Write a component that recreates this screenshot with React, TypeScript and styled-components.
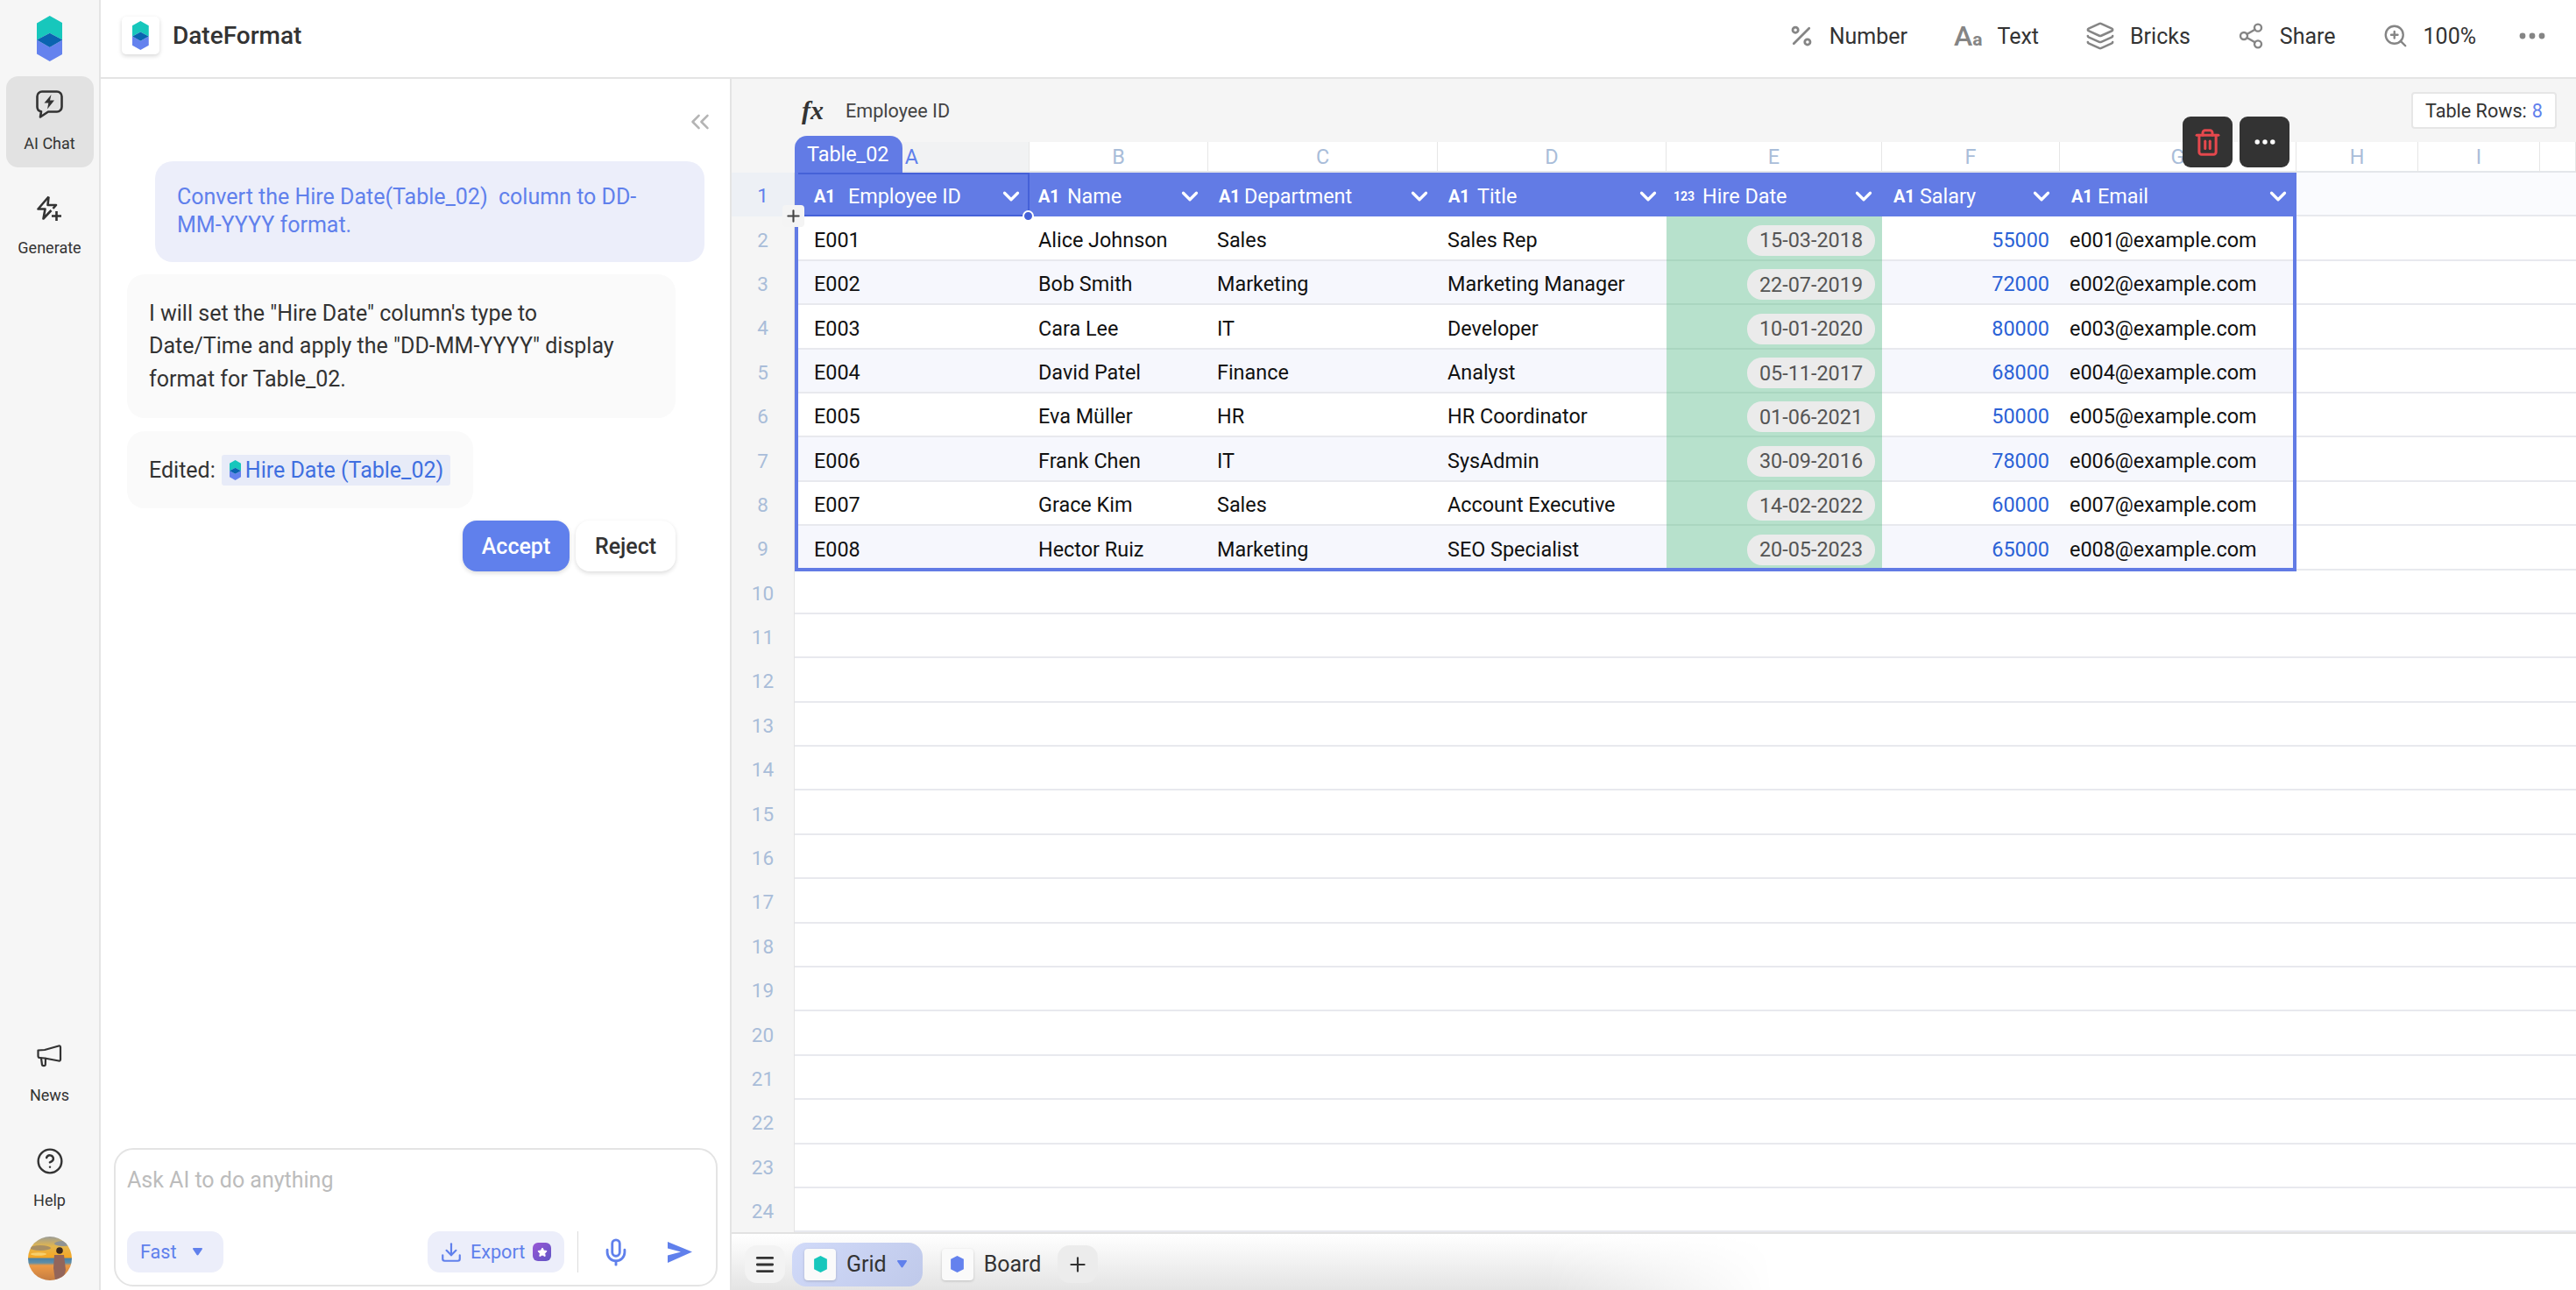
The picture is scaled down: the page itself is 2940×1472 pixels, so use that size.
import React from "react";
import styled, { createGlobalStyle } from "styled-components";
import {
  ChevronDown,
  ChevronsLeft,
  CircleHelp,
  Download,
  Layers,
  Menu,
  Mic,
  Percent,
  Plus,
  Share2,
  Star,
  Trash2,
  ZoomIn,
} from "lucide-react";

const GlobalStyle = createGlobalStyle`
  html, body { margin: 0; padding: 0; height: 100%; background: #fff; }
  body { font-family: Roboto, "Liberation Sans", sans-serif; color: #333; }
  #root { height: 100%; }
  * { box-sizing: border-box; }
`;

const BLUE = "#627be5";
const ACCENT = "#6080ec";
const GRID_COLS = "72px 268px 204px 262px 261px 246px 203px 270px 139px 139px 1fr";

const Page = styled.div`
  width: 2940px;
  height: 1472px;
  display: grid;
  grid-template-columns: 115px 1fr;
  overflow: hidden;
`;

/* left rail */
const Rail = styled.aside`
  display: flex;
  flex-direction: column;
  align-items: center;
  background: #f6f6f6;
  border-right: 2px solid #e4e4e4;
  padding-top: 18px;
`;

const LogoWrap = styled.div`
  height: 52px;
  margin-bottom: 17px;
  display: flex;
`;

const NavItem = styled.div<{ $active?: boolean; $gap?: number }>`
  width: 100px;
  height: 104px;
  margin-top: ${(p) => p.$gap ?? 0}px;
  padding-top: 14px;
  border-radius: 14px;
  display: flex;
  flex-direction: column;
  align-items: center;
  background: ${(p) => (p.$active ? "#e2e2e2" : "transparent")};
  color: #333;
`;

const NavIcon = styled.div`
  height: 36px;
  display: flex;
  align-items: center;
  justify-content: center;
`;

const NavLabel = styled.div`
  margin-top: 16px;
  font-size: 18px;
  line-height: 22px;
  color: #333;
`;

const RailBottom = styled.div`
  margin-top: auto;
  display: flex;
  flex-direction: column;
  align-items: center;
  padding-bottom: 11px;
`;

const Avatar = styled.div`
  margin-top: 14px;
  width: 50px;
  height: 50px;
  border-radius: 50%;
  overflow: hidden;
`;

/* main column */
const Main = styled.div`
  display: flex;
  flex-direction: column;
  min-width: 0;
`;

const TopBar = styled.header`
  height: 90px;
  flex: none;
  display: flex;
  align-items: center;
  padding: 0 35px 8px 24px;
  border-bottom: 2px solid #e4e4e4;
`;

const FileBadge = styled.div`
  width: 43px;
  height: 43px;
  border-radius: 5px;
  background: #fff;
  box-shadow: 0 2px 5px rgba(0, 0, 0, 0.16);
  display: flex;
  align-items: center;
  justify-content: center;
  margin-right: 15px;
`;

const FileName = styled.div`
  font-size: 28px;
  font-weight: 500;
  color: #333;
`;

const TopActions = styled.div`
  margin-left: auto;
  display: flex;
  align-items: center;
  gap: 53px;
  padding-top: 2px;
`;

const TopAction = styled.div`
  display: flex;
  align-items: center;
  gap: 17px;
  font-size: 25px;
  color: #333;

  svg {
    color: #858585;
    display: block;
  }
`;

const TextGlyph = styled.span`
  color: #858585;
  font-weight: 500;
  font-size: 32px;
  line-height: 1;
  display: inline-flex;
  align-items: baseline;

  small {
    font-size: 21px;
    font-weight: 700;
  }
`;

const ToolbarDots = styled.div`
  margin-left: -4px;
  display: flex;
`;

const Body = styled.div`
  flex: 1;
  display: grid;
  grid-template-columns: 720px 1fr;
  min-height: 0;
`;

/* chat */
const ChatPanel = styled.section`
  display: flex;
  flex-direction: column;
  border-right: 2px solid #e4e4e4;
  padding: 32px 0 4px;
  min-height: 0;
`;

const CollapseRow = styled.div`
  display: flex;
  justify-content: flex-end;
  padding-right: 17px;
  height: 62px;
  color: #b4b4b4;
`;

const UserBubble = styled.div`
  align-self: flex-end;
  width: 627px;
  margin-right: 29px;
  padding: 24.5px 25px;
  background: #eceefa;
  border-radius: 20px;
  color: ${ACCENT};
  font-size: 25px;
  line-height: 32.8px;
  white-space: pre-wrap;
`;

const AiBubble = styled.div`
  width: 626px;
  margin: 14px 0 0 30px;
  padding: 26px 25px;
  background: #fafafa;
  border-radius: 20px;
  font-size: 25px;
  line-height: 37.5px;
  color: #333;
`;

const EditedBubble = styled.div`
  width: 395px;
  height: 88px;
  margin: 15px 0 0 30px;
  padding-left: 25px;
  display: flex;
  align-items: center;
  gap: 7px;
  background: #fafafa;
  border-radius: 20px;
  font-size: 25px;
  color: #333;
`;

const RefChip = styled.span`
  display: inline-flex;
  align-items: center;
  gap: 5px;
  height: 35px;
  padding: 0 8px 0 9px;
  background: #e7ebf8;
  border-radius: 3px;
  color: #3f6fe0;
`;

const ActionRow = styled.div`
  display: flex;
  justify-content: flex-end;
  gap: 7px;
  margin: 14px 62px 0 0;
`;

const ActionButton = styled.button<{ $primary?: boolean }>`
  width: ${(p) => (p.$primary ? 122 : 114)}px;
  height: 58px;
  border: 0;
  border-radius: 16px;
  background: ${(p) => (p.$primary ? ACCENT : "#fff")};
  color: ${(p) => (p.$primary ? "#fff" : "#333")};
  box-shadow: 0 2px 5px rgba(0, 0, 0, 0.14);
  font: 500 25px Roboto, sans-serif;
`;

const Composer = styled.div`
  margin: auto 14px 0 15px;
  height: 158px;
  border: 2px solid #e4e4e4;
  border-radius: 22px;
  padding: 20px 27px 14px 13px;
  display: flex;
  flex-direction: column;
`;

const Placeholder = styled.div`
  font-size: 25px;
  line-height: 30px;
  color: #bcbcbc;
`;

const ComposerTools = styled.div`
  margin-top: auto;
  display: flex;
  align-items: center;
  height: 47px;
`;

const SoftChip = styled.div`
  height: 47px;
  border-radius: 14px;
  background: #eceefa;
  color: ${ACCENT};
  font-size: 21.6px;
  display: flex;
  align-items: center;
`;

const FastChip = styled(SoftChip)`
  width: 110px;
  padding-left: 15px;
  gap: 18px;
`;

const ExportChip = styled(SoftChip)`
  width: 156px;
  margin-left: auto;
  padding-left: 14px;
  gap: 9px;
`;

const ProBadge = styled.span`
  width: 21px;
  height: 21px;
  border-radius: 6px;
  background: linear-gradient(135deg, #9a57d6, #5f55c4);
  display: flex;
  align-items: center;
  justify-content: center;
`;

const ToolDivider = styled.div`
  width: 1px;
  height: 47px;
  margin: 0 26px 0 15px;
  background: #dcdcdc;
`;

const MicSlot = styled.div`
  width: 34px;
  margin-right: 42px;
  display: flex;
  justify-content: center;
  color: ${ACCENT};
`;

/* sheet */
const SheetPane = styled.section`
  position: relative;
  display: flex;
  flex-direction: column;
  min-width: 0;
  min-height: 0;
`;

const FormulaBar = styled.div`
  height: 72px;
  flex: none;
  display: flex;
  align-items: center;
  padding: 0 22px 0 80px;
  background: #f5f5f5;
  color: #444;
  font-size: 21.6px;
`;

const FxMark = styled.span`
  width: 50px;
  font: italic 700 30px "Liberation Serif", serif;
  color: #333;
`;

const RowCount = styled.div`
  margin-left: auto;
  height: 42px;
  padding: 0 14px;
  display: flex;
  align-items: center;
  gap: 6px;
  background: #fff;
  border: 2px solid #e6e6e6;
  border-radius: 4px;
  color: #333;
  font-size: 21.6px;

  b {
    font-weight: 400;
    color: ${ACCENT};
  }
`;

const FloatTools = styled.div`
  position: absolute;
  top: 43px;
  left: 1656px;
  display: flex;
  gap: 8px;
  z-index: 5;
`;

const FloatButton = styled.div`
  width: 57px;
  height: 58px;
  border-radius: 9px;
  background: #333;
  display: flex;
  align-items: center;
  justify-content: center;
`;

const TableTab = styled.div`
  position: absolute;
  top: 65px;
  left: 72px;
  width: 123px;
  height: 42px;
  padding-left: 14px;
  border-radius: 14px 14px 0 0;
  background: ${BLUE};
  color: #fff;
  font-size: 23.4px;
  line-height: 42px;
  z-index: 4;
`;

const GridArea = styled.div`
  position: relative;
  flex: 1;
  min-height: 0;
  overflow: hidden;
  background: #fff;
`;

const LetterRow = styled.div`
  height: 35px;
  display: grid;
  grid-template-columns: ${GRID_COLS};
  background: #fff;
`;

const LetterCorner = styled.div`
  background: #f5f5f5;
`;

const Letter = styled.div<{ $active?: boolean }>`
  display: flex;
  align-items: center;
  justify-content: center;
  font-size: 23.4px;
  color: ${(p) => (p.$active ? ACCENT : "#a9bdd9")};
  background: ${(p) => (p.$active ? "#f1f2f3" : "#fff")};
  border-right: 1px solid #e6e6e6;
  border-bottom: 2px solid #e4e6ea;
`;

const SheetRow = styled.div`
  height: 50.4px;
  display: grid;
  grid-template-columns: ${GRID_COLS};
`;

const RowNumber = styled.div<{ $active?: boolean }>`
  display: flex;
  align-items: center;
  justify-content: center;
  padding-top: 2px;
  font-size: 22.5px;
  color: ${(p) => (p.$active ? ACCENT : "#a9bdd9")};
  background: ${(p) => (p.$active ? "#edf0f5" : "#f5f5f5")};
  border-right: 1px solid #e4e4e4;
`;

const HeaderCell = styled.div<{ $selected?: boolean; $pad: number; $gap: number }>`
  display: flex;
  align-items: center;
  padding: 3px 6px 0 ${(p) => p.$pad}px;
  gap: ${(p) => p.$gap}px;
  background: ${BLUE};
  color: #fff;
  font-size: 23.4px;
  outline: ${(p) => (p.$selected ? "2px solid #4561d8" : "none")};
  outline-offset: -2px;

  svg {
    margin-left: auto;
    flex: none;
  }
`;

const TypeBadge = styled.span<{ $small?: boolean }>`
  font-weight: 700;
  font-size: ${(p) => (p.$small ? 14 : 20)}px;
  letter-spacing: ${(p) => (p.$small ? 0 : -0.5)}px;
`;

const Cell = styled.div<{ $alt?: boolean; $pad?: number; $right?: boolean }>`
  display: flex;
  align-items: center;
  justify-content: ${(p) => (p.$right ? "flex-end" : "flex-start")};
  padding: ${(p) => (p.$right ? `4.5px 12px 0 0` : `4.5px 0 0 ${p.$pad ?? 0}px`)};
  background: ${(p) => (p.$alt ? "#f6f7fd" : "#fff")};
  border-bottom: 2px solid #e8e9ee;
  color: #111;
  font-size: 23.4px;
`;

const DateCell = styled.div`
  display: flex;
  align-items: center;
  justify-content: flex-end;
  padding: 5.5px 8px 0 0;
  background: #b7e1cc;
  border-bottom: 2px solid #aad6c0;
`;

const DatePill = styled.span`
  width: 146px;
  height: 35px;
  border-radius: 17px;
  background: #ebebeb;
  color: #555;
  font-size: 23.4px;
  display: flex;
  align-items: center;
  justify-content: center;
`;

const Money = styled.span`
  color: #2b62d6;
`;

const OuterFill = styled.div<{ $tint?: boolean }>`
  grid-column: span 3;
  background: ${(p) => (p.$tint ? "#fafbfe" : "#fff")};
  border-bottom: 2px solid #e8e9ee;
`;

const EmptyFill = styled(OuterFill)`
  grid-column: span 10;
`;

const TableFrame = styled.div`
  position: absolute;
  left: 72px;
  top: 35px;
  width: 1714px;
  height: 454.6px;
  border: 4px solid ${BLUE};
  border-top: 0;
  pointer-events: none;
`;

const AddHandle = styled.div`
  position: absolute;
  left: 58px;
  top: 72px;
  width: 25px;
  height: 25px;
  border-radius: 4px;
  background: #f4f4f4;
  display: flex;
  align-items: center;
  justify-content: center;
  color: #444;
`;

const ResizeDot = styled.div`
  position: absolute;
  left: 332px;
  top: 78px;
  width: 13px;
  height: 13px;
  border-radius: 50%;
  background: #4561d8;
  border: 2px solid #fff;
`;

/* bottom tabs */
const ViewBar = styled.div`
  position: relative;
  height: 66px;
  flex: none;
  display: flex;
  align-items: center;
  padding: 5px 0 0 15px;
  background: #fff;
  border-top: 2px solid #e2e2e2;

  &::before {
    content: "";
    position: absolute;
    left: 0;
    top: 0;
    bottom: 0;
    width: 1190px;
    background: linear-gradient(to bottom, #ffffff, #e4e4e4);
    mask-image: linear-gradient(to right, #000 78%, transparent 100%);
  }

  > * {
    position: relative;
  }
`;

const RoundTool = styled.div<{ $tone: string }>`
  width: 46px;
  height: 43px;
  border-radius: 14px;
  background: ${(p) => p.$tone};
  display: flex;
  align-items: center;
  justify-content: center;
  color: #333;
`;

const ViewTab = styled.div<{ $active?: boolean }>`
  height: 50px;
  display: flex;
  align-items: center;
  gap: 12px;
  font-size: 25px;
  color: #333;
  border-radius: 16px;
  padding: ${(p) => (p.$active ? "0 18px 0 14px" : "0 19px 0 14px")};
  margin-left: 8px;
  background: ${(p) => (p.$active ? "linear-gradient(135deg, #d1daf9, #bfc9ea)" : "transparent")};
`;

const ViewIcon = styled.div`
  width: 36px;
  height: 36px;
  border-radius: 4px;
  background: #fafafa;
  box-shadow: 0 1px 3px rgba(0, 0, 0, 0.18);
  display: flex;
  align-items: center;
  justify-content: center;
`;

const Logo = ({ h }: { h: number }) => (
  <svg width={(h * 88) / 155} height={h} viewBox="0 0 88 155">
    <path d="M44 0 88 25V82L44 59 0 82V25Z" fill="#17c7bc" />
    <path d="M0 82 44 107 88 82V130L44 155 0 130Z" fill="#6482ee" />
    <path d="M0 82 44 59 88 82 44 107Z" fill="#0a64b0" />
  </svg>
);

const Hexagon = ({ color }: { color: string }) => (
  <svg width="15" height="19" viewBox="0 0 14 18">
    <path d="M7 0 14 3.500V14.500L7 18 0 14.500V3.500Z" fill={color} />
  </svg>
);

const Caret = ({ size = 11 }: { size?: number }) => (
  <svg width={size} height={size * 0.8} viewBox="0 0 10 8">
    <path d="M1 0h8c.8 0 1.200.8.800 1.400L5.800 7.200c-.4.6-1.200.6-1.600 0L.2 1.400C-.2.8.2 0 1 0z" fill={ACCENT} />
  </svg>
);

const Dots = ({ color, size = 30 }: { color: string; size?: number }) => (
  <svg width={size} height="8" viewBox="0 0 30 8">
    <circle cx="4" cy="4" r="3.400" fill={color} />
    <circle cx="15" cy="4" r="3.400" fill={color} />
    <circle cx="26" cy="4" r="3.400" fill={color} />
  </svg>
);

const ChatBoltIcon = () => (
  <svg width="31" height="33" viewBox="0 0 31 33" fill="none">
    <path
      d="M7 1.500h17a5.500 5.500 0 0 1 5.500 5.500v12a5.500 5.500 0 0 1-5.500 5.500H14l-9 6 1-6.200A5.500 5.500 0 0 1 1.500 19V7A5.500 5.500 0 0 1 7 1.500z"
      stroke="#333"
      strokeWidth="2.600"
      strokeLinejoin="round"
    />
    <path d="M17.500 5 9.500 14.500h4.800L13 21.500l8-10h-5z" fill="#333" />
  </svg>
);

const GenerateIcon = () => (
  <svg width="30" height="30" viewBox="0 0 30 30" fill="none" stroke="#333" strokeWidth="2.600" strokeLinejoin="round">
    <path d="M13.500 1.500 1.500 15.500h8L7.500 26.500 16.500 17" />
    <path d="M13.500 1.500 12.500 11H22l-3.500 4" />
    <path d="M22.500 18v11M17 23.500h11" />
  </svg>
);

const NewsIcon = () => (
  <svg width="29" height="26" viewBox="0 0 29 26" fill="none" stroke="#333" strokeWidth="2.200" strokeLinejoin="round" strokeLinecap="round">
    <path d="M1.500 6.500 9 6 25 1.500c1.200-.3 2 .4 2 1.500v14c0 1.200-1 1.800-2 1.500L9 15.500l-5.500-.5c-1.300 0-2-.8-2-2z" />
    <path d="M5 15.500 6 23c.2 1.500 3.800 1.500 3.800-.2l.2-7" />
  </svg>
);

const SendIcon = () => (
  <svg width="28" height="24" viewBox="0 0 28 24">
    <path d="M0 0 28 11.500 0 24V15.500L15 11.500 0 7.500Z" fill={ACCENT} />
  </svg>
);

const AvatarArt = () => (
  <svg width="50" height="50" viewBox="0 0 50 50">
    <defs>
      <linearGradient id="sky" x1="0" y1="0" x2="0" y2="1">
        <stop offset="0" stopColor="#9a9c96" />
        <stop offset="0.22" stopColor="#e3b64e" />
        <stop offset="0.48" stopColor="#f5a623" />
        <stop offset="0.5" stopColor="#4a7fa6" />
        <stop offset="0.6" stopColor="#5f8fa8" />
        <stop offset="0.66" stopColor="#ee9a45" />
        <stop offset="1" stopColor="#c47c42" />
      </linearGradient>
    </defs>
    <rect width="50" height="50" fill="url(#sky)" />
    <ellipse cx="14" cy="13" rx="12" ry="3" fill="#a88e63" />
    <ellipse cx="40" cy="8" rx="10" ry="3" fill="#8f9394" />
    <ellipse cx="12" cy="20" rx="9" ry="1.800" fill="#f7cf6c" />
    <circle cx="36" cy="16" r="3.800" fill="#3a2a20" />
    <path d="M30 21h11l2 17-3 12h-9l-2-14z" fill="#93655a" />
  </svg>
);

const columns = [
  { name: "Employee ID", type: "A1", pad: 22, gap: 15 },
  { name: "Name", type: "A1", pad: 10, gap: 9 },
  { name: "Department", type: "A1", pad: 12, gap: 5 },
  { name: "Title", type: "A1", pad: 12, gap: 9 },
  { name: "Hire Date", type: "123", pad: 8, gap: 9 },
  { name: "Salary", type: "A1", pad: 13, gap: 6 },
  { name: "Email", type: "A1", pad: 13, gap: 6 },
];

const employees = [
  ["E001", "Alice Johnson", "Sales", "Sales Rep", "15-03-2018", "55000", "e001@example.com"],
  ["E002", "Bob Smith", "Marketing", "Marketing Manager", "22-07-2019", "72000", "e002@example.com"],
  ["E003", "Cara Lee", "IT", "Developer", "10-01-2020", "80000", "e003@example.com"],
  ["E004", "David Patel", "Finance", "Analyst", "05-11-2017", "68000", "e004@example.com"],
  ["E005", "Eva Müller", "HR", "HR Coordinator", "01-06-2021", "50000", "e005@example.com"],
  ["E006", "Frank Chen", "IT", "SysAdmin", "30-09-2016", "78000", "e006@example.com"],
  ["E007", "Grace Kim", "Sales", "Account Executive", "14-02-2022", "60000", "e007@example.com"],
  ["E008", "Hector Ruiz", "Marketing", "SEO Specialist", "20-05-2023", "65000", "e008@example.com"],
];

const letters = ["A", "B", "C", "D", "E", "F", "G", "H", "I", ""];

export default function App() {
  const emptyRows = Array.from({ length: 15 }, (_, i) => i + 10);

  return (
    <Page>
      <GlobalStyle />
      <Rail>
        <LogoWrap>
          <Logo h={52} />
        </LogoWrap>
        <NavItem $active>
          <NavIcon>
            <ChatBoltIcon />
          </NavIcon>
          <NavLabel>AI Chat</NavLabel>
        </NavItem>
        <NavItem $gap={15}>
          <NavIcon>
            <GenerateIcon />
          </NavIcon>
          <NavLabel>Generate</NavLabel>
        </NavItem>
        <RailBottom>
          <NavItem>
            <NavIcon>
              <NewsIcon />
            </NavIcon>
            <NavLabel>News</NavLabel>
          </NavItem>
          <NavItem $gap={16}>
            <NavIcon>
              <CircleHelp size={32} strokeWidth={1.8} color="#333" />
            </NavIcon>
            <NavLabel>Help</NavLabel>
          </NavItem>
          <Avatar>
            <AvatarArt />
          </Avatar>
        </RailBottom>
      </Rail>

      <Main>
        <TopBar>
          <FileBadge>
            <Logo h={33} />
          </FileBadge>
          <FileName>DateFormat</FileName>
          <TopActions>
            <TopAction>
              <Percent size={30} strokeWidth={2.2} />
              Number
            </TopAction>
            <TopAction>
              <TextGlyph>
                A<small>a</small>
              </TextGlyph>
              Text
            </TopAction>
            <TopAction>
              <Layers size={34} strokeWidth={1.8} />
              Bricks
            </TopAction>
            <TopAction>
              <Share2 size={32} strokeWidth={1.8} />
              Share
            </TopAction>
            <TopAction>
              <ZoomIn size={30} strokeWidth={1.9} />
              100%
            </TopAction>
            <ToolbarDots>
              <Dots color="#858585" />
            </ToolbarDots>
          </TopActions>
        </TopBar>

        <Body>
          <ChatPanel>
            <CollapseRow>
              <ChevronsLeft size={34} strokeWidth={1.8} />
            </CollapseRow>
            <UserBubble>
              {"Convert the Hire Date(Table_02)  column to DD-"}
              <br />
              MM-YYYY format.
            </UserBubble>
            <AiBubble>
              I will set the "Hire Date" column's type to
              <br />
              Date/Time and apply the "DD-MM-YYYY" display
              <br />
              format for Table_02.
            </AiBubble>
            <EditedBubble>
              Edited:
              <RefChip>
                <Logo h={23} />
                Hire Date (Table_02)
              </RefChip>
            </EditedBubble>
            <ActionRow>
              <ActionButton $primary>Accept</ActionButton>
              <ActionButton>Reject</ActionButton>
            </ActionRow>
            <Composer>
              <Placeholder>Ask AI to do anything</Placeholder>
              <ComposerTools>
                <FastChip>
                  Fast
                  <Caret />
                </FastChip>
                <ExportChip>
                  <Download size={26} strokeWidth={2} />
                  Export
                  <ProBadge>
                    <Star size={12} fill="#fff" color="#fff" />
                  </ProBadge>
                </ExportChip>
                <ToolDivider />
                <MicSlot>
                  <Mic size={36} strokeWidth={2} />
                </MicSlot>
                <SendIcon />
              </ComposerTools>
            </Composer>
          </ChatPanel>

          <SheetPane>
            <FormulaBar>
              <FxMark>fx</FxMark>
              Employee ID
              <RowCount>
                Table Rows: <b>8</b>
              </RowCount>
            </FormulaBar>
            <FloatTools>
              <FloatButton>
                <Trash2 size={33} color="#e5484d" strokeWidth={2.2} />
              </FloatButton>
              <FloatButton>
                <Dots color="#fff" size={24} />
              </FloatButton>
            </FloatTools>
            <TableTab>Table_02</TableTab>

            <GridArea>
              <LetterRow>
                <LetterCorner />
                {letters.map((l, i) => (
                  <Letter key={i} $active={i === 0}>
                    {l}
                  </Letter>
                ))}
              </LetterRow>

              <SheetRow>
                <RowNumber $active>1</RowNumber>
                {columns.map((c, i) => (
                  <HeaderCell key={c.name} $selected={i === 0} $pad={c.pad} $gap={c.gap}>
                    <TypeBadge $small={c.type === "123"}>{c.type}</TypeBadge>
                    {c.name}
                    <ChevronDown size={30} strokeWidth={2.6} />
                  </HeaderCell>
                ))}
                <OuterFill $tint />
              </SheetRow>

              {employees.map((row, i) => {
                const alt = i % 2 === 1;
                return (
                  <SheetRow key={row[0]}>
                    <RowNumber>{i + 2}</RowNumber>
                    <Cell $alt={alt} $pad={22}>{row[0]}</Cell>
                    <Cell $alt={alt} $pad={10}>{row[1]}</Cell>
                    <Cell $alt={alt} $pad={10}>{row[2]}</Cell>
                    <Cell $alt={alt} $pad={11}>{row[3]}</Cell>
                    <DateCell>
                      <DatePill>{row[4]}</DatePill>
                    </DateCell>
                    <Cell $alt={alt} $right>
                      <Money>{row[5]}</Money>
                    </Cell>
                    <Cell $alt={alt} $pad={11}>{row[6]}</Cell>
                    <OuterFill />
                  </SheetRow>
                );
              })}

              {emptyRows.map((n) => (
                <SheetRow key={n}>
                  <RowNumber>{n}</RowNumber>
                  <EmptyFill />
                </SheetRow>
              ))}

              <TableFrame />
              <AddHandle>
                <Plus size={21} strokeWidth={2.4} />
              </AddHandle>
              <ResizeDot />
            </GridArea>

            <ViewBar>
              <RoundTool $tone="#f3f3f3">
                <Menu size={26} strokeWidth={2.6} />
              </RoundTool>
              <ViewTab $active>
                <ViewIcon>
                  <Hexagon color="#17c7bc" />
                </ViewIcon>
                Grid
                <Caret />
              </ViewTab>
              <ViewTab>
                <ViewIcon>
                  <Hexagon color="#6482ee" />
                </ViewIcon>
                Board
              </ViewTab>
              <RoundTool $tone="#ececec">
                <Plus size={26} strokeWidth={2} />
              </RoundTool>
            </ViewBar>
          </SheetPane>
        </Body>
      </Main>
    </Page>
  );
}
